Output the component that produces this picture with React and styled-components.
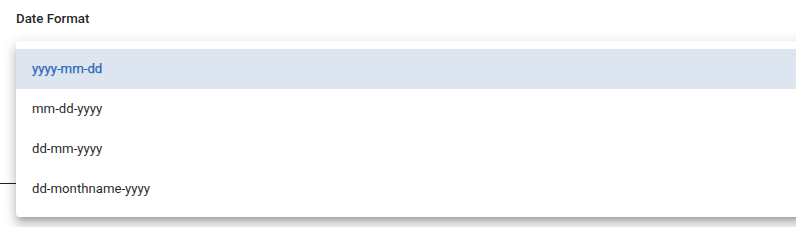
import React from 'react';
import styled, { createGlobalStyle } from 'styled-components';

const GlobalStyle = createGlobalStyle`
  *, *::before, *::after {
    box-sizing: border-box;
  }
  html, body {
    margin: 0;
    padding: 0;
    background: #fff;
    overflow: hidden;
  }
  body {
    font-family: Roboto, "Liberation Sans", sans-serif;
  }
`;

const Page = styled.div`
  position: relative;
  width: 796px;
  height: 227px;
  overflow: hidden;
`;

const Field = styled.div`
  padding: 11px 16px 0 16px;
`;

const Label = styled.div`
  font-size: 13.3px;
  font-weight: 500;
  color: rgba(0, 0, 0, 0.87);
  line-height: 16px;
`;

const Underline = styled.div`
  margin-top: 156px;
  margin-left: -16px;
  width: 300px;
  height: 1px;
  background: rgba(0, 0, 0, 0.87);
`;

const Menu = styled.ul`
  position: absolute;
  top: 41px;
  left: 16px;
  right: -24px;
  margin: 0;
  padding: 8px 0;
  list-style: none;
  background: #fff;
  border-radius: 4px;
  box-shadow: 0 5px 5px -3px rgba(0, 0, 0, 0.2), 0 8px 10px 1px rgba(0, 0, 0, 0.14),
    0 3px 14px 2px rgba(0, 0, 0, 0.12);
`;

const Item = styled.li`
  height: 40px;
  display: flex;
  align-items: center;
  padding: 0 16px 1px;
  font-size: 13.2px;
  font-weight: 400;
  color: ${(p) => (p.$selected ? '#2a69b8' : 'rgba(0, 0, 0, 0.87)')};
  background: ${(p) => (p.$selected ? '#dde6f0' : 'transparent')};
  -webkit-text-stroke: ${(p) => (p.$selected ? '0.25px' : '0')};
`;

const formats = ['yyyy-mm-dd', 'mm-dd-yyyy', 'dd-mm-yyyy', 'dd-monthname-yyyy'];

const App = () => {
  return (
    <Page>
      <GlobalStyle />
      <Field>
        <Label>Date Format</Label>
        <Underline />
      </Field>
      <Menu>
        {formats.map((f, i) => (
          <Item key={f} $selected={i === 0}>
            {f}
          </Item>
        ))}
      </Menu>
    </Page>
  );
};

export default App;
